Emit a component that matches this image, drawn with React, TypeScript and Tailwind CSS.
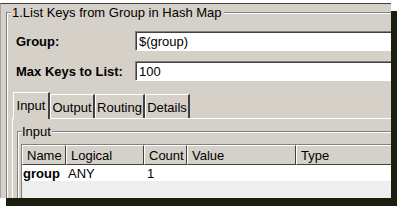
const sunken =
  "border-t border-l border-[#808080] border-b border-r border-b-white border-r-white shadow-[inset_1px_1px_0_#404040]";

function Field({ label, value }: { label: string; value: string }) {
  return (
    <div className="flex items-center">
      <div className="w-[119px] shrink-0 font-bold text-[13px] whitespace-nowrap">{label}</div>
      <div className={`h-[20px] w-[300px] shrink-0 bg-white pl-[3px] flex items-center text-[13px] ${sunken}`}>
        {value}
      </div>
    </div>
  );
}

const tabs = [
  { name: "Input", w: "w-[37px]" },
  { name: "Output", w: "w-[45px]" },
  { name: "Routing", w: "w-[50px]" },
  { name: "Details", w: "w-[45px]" },
];

const columns = [
  { name: "Name", w: "w-[44px]" },
  { name: "Logical", w: "w-[78px]" },
  { name: "Count", w: "w-[43px]" },
  { name: "Value", w: "w-[109px]" },
  { name: "Type", w: "w-[140px]" },
];

export default function App() {
  return (
    <div className="w-[397px] h-[206px] bg-white pt-[3px] font-['Liberation_Sans',sans-serif] text-[13px] text-black leading-none">
      <div className="w-[391px] h-[195px] bg-[#d5d1c9] border-t border-[#404040] border-l border-l-[#a8a49c] shadow-[6px_8px_0_0_#1a1e0e] overflow-hidden">
        {/* outer group box */}
        <div className="relative ml-[5px] mt-[8px] w-[420px] h-[220px] border-t border-l border-[#808080] shadow-[inset_1px_1px_0_#fff]">
          <span className="absolute left-[4px] -top-[8px] bg-[#d5d1c9] pl-[1px] pr-[2px] leading-[15px] whitespace-nowrap">
            1.List Keys from Group in Hash Map
          </span>

          <div className="flex flex-col gap-[10px] pl-[9px] pt-[18px]">
            <Field label="Group:" value="$(group)" />
            <Field label="Max Keys to List:" value="100" />
          </div>

          {/* tabs */}
          <div className="mt-[10px] ml-[5px]">
            <div className="flex items-end pl-[1px] h-[27px]">
              {tabs.map((t, i) => (
                <div
                  key={t.name}
                  className={
                    i === 0
                      ? `${t.w} h-[27px] pt-[6px] text-center bg-[#d5d1c9] border-t border-l border-white border-r-2 border-r-[#404040] relative z-10 -mb-px`
                      : `${t.w} h-[24px] pt-[6px] text-center border-t border-l border-white border-r-2 border-r-[#404040]`
                  }
                >
                  {t.name}
                </div>
              ))}
            </div>

            <div className="border-t border-l border-white h-[100px] pl-[4px] pt-[12px]">
              {/* inner group box */}
              <div className="relative border-t border-l border-[#808080] shadow-[inset_1px_1px_0_#fff] pl-[3px] pt-[12px] h-[90px]">
                <span className="absolute left-[4px] -top-[8px] bg-[#d5d1c9] pr-[1px] leading-[15px]">
                  Input
                </span>

                {/* table */}
                <div className="border-t border-l border-[#808080] w-[420px] bg-[#eeeeec]">
                  <div className="flex h-[20px] bg-[#d5d1c9]">
                    {columns.map((c) => (
                      <div
                        key={c.name}
                        className={`${c.w} shrink-0 flex items-center pl-[4px] border-t border-l border-white border-r border-b border-r-[#404040] border-b-[#404040]`}
                      >
                        {c.name}
                      </div>
                    ))}
                  </div>
                  <div className="flex h-[16px] bg-white items-center">
                    <div className="w-[44px] pl-[1px] font-bold">group</div>
                    <div className="w-[78px] pl-[2px]">ANY</div>
                    <div className="w-[43px] pl-[3px]">1</div>
                  </div>
                  <div className="h-[40px]" />
                </div>
              </div>
            </div>
          </div>
        </div>
      </div>
    </div>
  );
}
